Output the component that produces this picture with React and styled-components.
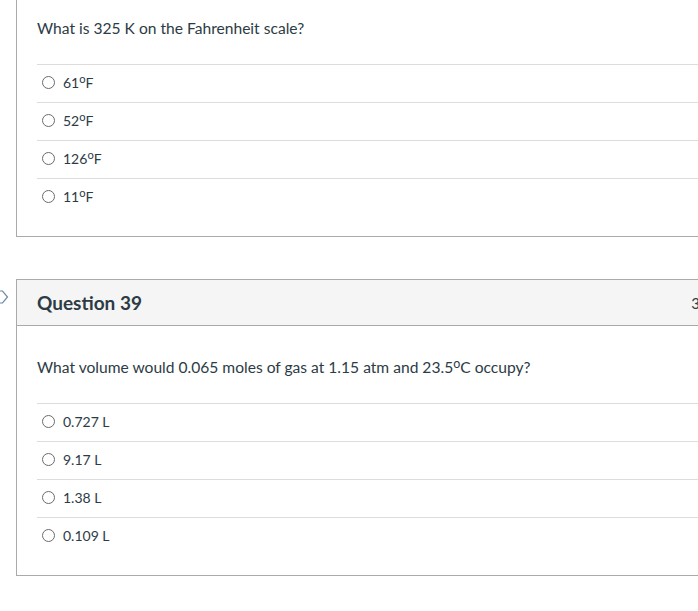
import styled, { createGlobalStyle } from "styled-components";

const GlobalStyle = createGlobalStyle`
  html, body {
    margin: 0;
    padding: 0;
    background: #fff;
    overflow: hidden;
  }
  body {
    font-family: "Lato", "Helvetica Neue", Arial, sans-serif;
    color: #2d3b45;
  }
`;

const Page = styled.div`
  display: flex;
  flex-direction: column;
  gap: 42px;
  padding-left: 16px;
`;

const Card = styled.div`
  position: relative;
  width: 727px;
  border: 1px solid #aaaaaa;
  border-top: ${(p) => (p.$cut ? "none" : "1px solid #aaaaaa")};
  margin-top: ${(p) => (p.$cut ? "-13px" : "0")};
  background: #fff;
`;

const Header = styled.div`
  display: flex;
  align-items: center;
  justify-content: space-between;
  height: 45px;
  padding: 0 20px;
  background: #f5f5f5;
  border-bottom: 1px solid #aaaaaa;
`;

const Title = styled.h2`
  margin: 0;
  font-size: 19px;
  font-weight: 700;
`;

const Points = styled.span`
  font-size: 15px;
`;

const Flag = styled.svg`
  position: absolute;
  left: -17px;
  top: 10px;
`;

const Body = styled.div`
  padding: 29px 0 20px 20px;
`;

const QuestionText = styled.p`
  margin: 0 0 24px;
  font-size: 15.6px;
  line-height: 24px;
`;

const Deg = styled.span`
  font-size: 0.8em;
  line-height: 0;
  vertical-align: 0.44em;
`;

const Answers = styled.div`
  display: flex;
  flex-direction: column;
`;

const Answer = styled.label`
  display: flex;
  align-items: center;
  gap: 8px;
  height: 34px;
  padding: 0 0 3px 5px;
  border-top: 1px solid #dddddd;
  font-size: 14px;
`;

const Radio = styled.span`
  width: 11px;
  height: 11px;
  border: 1px solid #6b6b6b;
  border-radius: 50%;
  flex-shrink: 0;
`;

const questions = [
  {
    text: "What is 325 K on the Fahrenheit scale?",
    answers: ["61°F", "52°F", "126°F", "11°F"],
    cut: true,
  },
  {
    title: "Question 39",
    points: "3 pts",
    text: "What volume would 0.065 moles of gas at 1.15 atm and 23.5°C occupy?",
    answers: ["0.727 L", "9.17 L", "1.38 L", "0.109 L"],
  },
];

// degree signs in the source are written as a raised "o"
function WithDegrees({ children }) {
  return children.split("°").map((part, i) => (
    <span key={i}>
      {i > 0 && <Deg>o</Deg>}
      {part}
    </span>
  ));
}

export default function App() {
  return (
    <>
      <GlobalStyle />
      <Page>
        {questions.map((q, i) => (
          <Card key={i} $cut={q.cut}>
            {q.title && (
              <>
                <Flag width="9" height="15" viewBox="0 0 9 15">
                  <path
                    d="M0 1 H2.5 L7.5 7 L2.5 13 H0"
                    fill="none"
                    stroke="#6d8aa6"
                    strokeWidth="1.2"
                  />
                </Flag>
                <Header>
                  <Title>{q.title}</Title>
                  <Points>{q.points}</Points>
                </Header>
              </>
            )}
            <Body>
              <QuestionText>
                <WithDegrees>{q.text}</WithDegrees>
              </QuestionText>
              <Answers>
                {q.answers.map((a) => (
                  <Answer key={a}>
                    <Radio />
                    <span>
                      <WithDegrees>{a}</WithDegrees>
                    </span>
                  </Answer>
                ))}
              </Answers>
            </Body>
          </Card>
        ))}
      </Page>
    </>
  );
}
